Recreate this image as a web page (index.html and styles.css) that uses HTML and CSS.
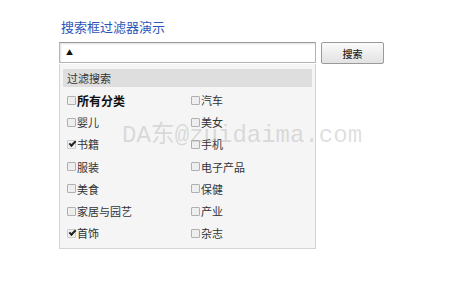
FILE: index.html
```html
<!DOCTYPE html>
<html>
<head>
<meta charset="utf-8">
<link rel="stylesheet" href="styles.css">
</head>
<body>
<div class="wrap">
  <h1 class="title">搜索框过滤器演示</h1>
  <div class="bar">
    <div class="field"><span class="arrow">▲</span></div>
    <button class="btn">搜索</button>
  </div>
  <div class="panel">
    <div class="head">过滤搜索</div>
    <div class="grid">
      <label class="item bold"><span class="cb"></span>所有分类</label>
      <label class="item"><span class="cb"></span>汽车</label>
      <label class="item"><span class="cb"></span>婴儿</label>
      <label class="item"><span class="cb"></span>美女</label>
      <label class="item"><span class="cb on"></span>书籍</label>
      <label class="item"><span class="cb"></span>手机</label>
      <label class="item"><span class="cb"></span>服装</label>
      <label class="item"><span class="cb"></span>电子产品</label>
      <label class="item"><span class="cb"></span>美食</label>
      <label class="item"><span class="cb"></span>保健</label>
      <label class="item"><span class="cb"></span>家居与园艺</label>
      <label class="item"><span class="cb"></span>产业</label>
      <label class="item"><span class="cb on"></span>首饰</label>
      <label class="item"><span class="cb"></span>杂志</label>
    </div>
  </div>
  <div class="watermark">DA东@zuidaima.com</div>
</div>
</body>
</html>
```
FILE: styles.css
```css
* { box-sizing: border-box; }
html, body { margin: 0; padding: 0; background: #fff; }
body { font-family: "Noto Sans CJK SC", "Noto Sans", sans-serif; color: #222; }
.wrap { position: relative; padding: 18px 0 0 59px; width: 474px; height: 283px; }
.title { margin: 0 0 6px 2px; font-size: 13px; font-weight: normal; color: #2b55b8; line-height: 18px; }
.bar { display: flex; align-items: flex-start; gap: 5px; }
.field { width: 257px; height: 21px; border: 1px solid #b4b4b4; border-top-color: #999; box-shadow: inset 1px 1px 2px rgba(0,0,0,0.12); background: #fff; display: flex; align-items: center; padding-left: 6px; }
.arrow { font-size: 7px; color: #111; line-height: 1; }
.btn { width: 63px; height: 22px; border: 1px solid #9a9a9a; border-radius: 2px; background: linear-gradient(#fafafa, #e2e2e2); font-family: "Noto Sans CJK SC", sans-serif; font-size: 10px; font-weight: 500; color: #222; padding: 0; }
.panel { width: 257px; height: 185px; border: 1px solid #d4d4d4; border-top: none; background: #f5f5f5; padding: 5px 3px 0 3px; }
.head { height: 18px; background: #dedede; font-size: 11px; line-height: 18px; padding-left: 4px; color: #333; }
.grid { display: grid; grid-template-columns: 124px 124px; grid-auto-rows: 22.2px; padding: 2px 0 0 4px; }
.item { display: flex; align-items: center; font-size: 11px; color: #333; }
.item.bold { font-weight: bold; font-size: 12px; color: #111; }
.cb { width: 9px; height: 9px; border: 1px solid #b0b0b0; background: #eee; margin-right: 1px; position: relative; border-radius: 1px; flex: none; }
.cb.on { border-color: #ccc; background: #f0f0f0; }
.cb.on::after { content: ""; position: absolute; left: 1px; top: 0px; width: 5px; height: 2px; border-left: 2px solid #222; border-bottom: 2px solid #222; transform: rotate(-45deg); }
.watermark { position: absolute; left: 122px; top: 114px; font-family: "Liberation Mono", "Noto Sans CJK SC", monospace; font-size: 24px; color: rgba(170,170,170,0.38); white-space: nowrap; pointer-events: none; }
```
